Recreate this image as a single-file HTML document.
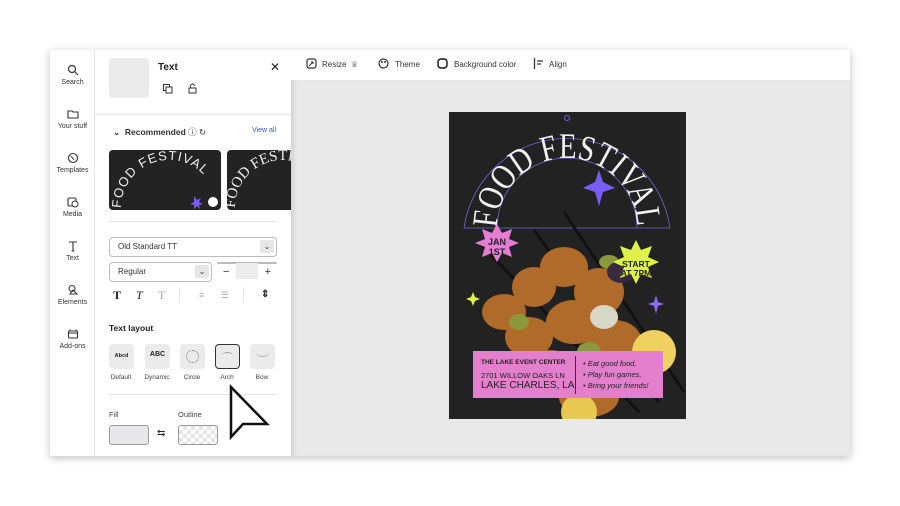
<!DOCTYPE html>
<html><head><meta charset="utf-8"><style>
*{box-sizing:border-box;margin:0;padding:0}
body{width:900px;height:506px;background:#fff;font-family:"Liberation Sans",sans-serif;position:relative;overflow:hidden;color:#222}
.win{position:absolute;left:50px;top:50px;width:800px;height:406px;background:#fff;box-shadow:0 2px 8px rgba(0,0,0,.25);overflow:hidden}
.rail{position:absolute;left:0;top:0;width:45px;height:406px;border-right:1px solid #e6e6e6}
.ri{position:absolute;left:0;width:45px;text-align:center;font-size:7px;color:#333}
.ri svg{display:block;margin:0 auto 3px}
.panel{position:absolute;left:45px;top:0;width:196px;height:406px;background:#fff}
.canvas{position:absolute;left:241px;top:30px;width:559px;height:376px;background:#e9e9e9;box-shadow:inset 6px 0 8px -6px rgba(0,0,0,.2)}
.tb{position:absolute;left:241px;top:0;width:559px;height:30px;background:#fff;font-size:8px;color:#333}
.tb span{position:absolute;top:10px}
.sel{position:absolute;border:1px solid #bbb;border-radius:4px;background:#fff;font-size:8px;color:#333;padding-left:8px;line-height:18px}
.lay{position:absolute;top:294px;width:25px;height:25px;background:#ebebeb;border-radius:4px}
.ll{position:absolute;top:324px;font-size:6.5px;color:#444;width:36px;text-align:center}
</style></head><body>
<div class="win">
 <div class="rail">
  <div class="ri" style="top:14px"><svg width="12" height="12" viewBox="0 0 12 12"><circle cx="5" cy="5" r="3.5" fill="none" stroke="#333" stroke-width="1.2"/><path d="M7.5 7.5L11 11" stroke="#333" stroke-width="1.2"/></svg>Search</div>
  <div class="ri" style="top:58px"><svg width="12" height="12" viewBox="0 0 12 12"><path d="M1 3h4l1 1h5v6H1z" fill="none" stroke="#333" stroke-width="1.1"/></svg>Your stuff</div>
  <div class="ri" style="top:102px"><svg width="12" height="12" viewBox="0 0 12 12"><circle cx="6" cy="6" r="4.5" fill="none" stroke="#333" stroke-width="1.1"/><path d="M4 4l3 4" stroke="#333"/></svg>Templates</div>
  <div class="ri" style="top:146px"><svg width="12" height="12" viewBox="0 0 12 12"><rect x="1" y="2" width="8" height="8" rx="1.5" fill="none" stroke="#333" stroke-width="1.1"/><circle cx="8" cy="8" r="3" fill="#fff" stroke="#333"/></svg>Media</div>
  <div class="ri" style="top:190px"><svg width="12" height="12" viewBox="0 0 12 12"><path d="M2 2h8M6 2v9M4.5 11h3" stroke="#333" stroke-width="1.1" fill="none"/></svg>Text</div>
  <div class="ri" style="top:234px"><svg width="12" height="12" viewBox="0 0 12 12"><circle cx="5" cy="4.5" r="3" fill="none" stroke="#333"/><path d="M3 10l3-4 4 4z" fill="none" stroke="#333"/></svg>Elements</div>
  <div class="ri" style="top:278px"><svg width="12" height="12" viewBox="0 0 12 12"><rect x="1.5" y="3" width="9" height="7" rx="1" fill="none" stroke="#333" stroke-width="1.1"/><path d="M3 3V1.5M9 3V1.5M1.5 5h9" stroke="#333"/></svg>Add-ons</div>
 </div>
 <div class="panel">
  <div style="position:absolute;left:14px;top:8px;width:40px;height:40px;background:#ebebeb;border-radius:4px"></div>
  <div style="position:absolute;left:63px;top:12px;font-size:10px;font-weight:bold">Text</div>
  <div style="position:absolute;left:175px;top:10px;font-size:12px">✕</div>
  <svg style="position:absolute;left:68px;top:34px" width="10" height="10" viewBox="0 0 10 10"><rect x="0.5" y="0.5" width="6" height="6" fill="none" stroke="#333"/><rect x="3" y="3" width="6" height="6" fill="#fff" stroke="#333"/></svg>
  <svg style="position:absolute;left:93px;top:33px" width="9" height="11" viewBox="0 0 9 11"><rect x="1" y="5" width="7" height="5" fill="none" stroke="#333"/><path d="M2.5 5V3a2 2 0 0 1 4 0" fill="none" stroke="#333"/></svg>
  <div style="position:absolute;left:0;top:63px;width:196px;height:3px;background:#f2f2f2"></div>
  <div style="position:absolute;left:18px;top:76px;font-size:8.5px;font-weight:bold;color:#333">⌄&nbsp; Recommended <span style="font-weight:normal">ⓘ ↻</span></div>
  <div style="position:absolute;left:157px;top:77px;font-size:7px;color:#3a56c5">View all</div>
  <div style="position:absolute;left:14px;top:100px;width:112px;height:60px;background:#232323;border-radius:4px;overflow:hidden">
   <svg width="112" height="60"><defs><path id="a1" d="M12 58 A48 48 0 0 1 108 58"/></defs><text font-family="Liberation Sans" font-size="13" fill="#eee" letter-spacing="1"><textPath href="#a1">FOOD FESTIVAL</textPath></text><path d="M85 46l3 4 4-2-2 4 4 2-4 1 1 4-3-3-3 3 0-4-4-1 4-2z" fill="#7a5cf5"/><circle cx="104" cy="52" r="5" fill="#fff"/></svg>
  </div>
  <div style="position:absolute;left:132px;top:100px;width:70px;height:60px;background:#232323;border-radius:4px;overflow:hidden">
   <svg width="112" height="60"><defs><path id="a2" d="M8 58 A48 48 0 0 1 104 58"/></defs><text font-family="Liberation Serif" font-size="15" fill="#eee"><textPath href="#a2">FOOD FESTIVAL</textPath></text></svg>
  </div>
  <div style="position:absolute;left:14px;top:171px;width:168px;height:1px;background:#e5e5e5"></div>
  <div class="sel" style="left:14px;top:187px;width:168px">Old Standard TT<span style="position:absolute;right:2px;top:2px;width:14px;height:13px;background:#e6e6e6;border-radius:2px;text-align:center;line-height:13px">⌄</span></div>
  <div class="sel" style="left:14px;top:212px;width:103px">Regular<span style="position:absolute;right:2px;top:2px;width:14px;height:13px;background:#e6e6e6;border-radius:2px;text-align:center;line-height:13px">⌄</span></div>
  <div class="sel" style="left:122px;top:212px;width:60px;padding:0"><span style="position:absolute;left:5px;font-size:11px">−</span><span style="position:absolute;left:18px;width:22px;height:16px;background:#ececec"></span><span style="position:absolute;right:5px;font-size:11px">+</span></div>
  <div style="position:absolute;left:18px;top:238px;font-family:'Liberation Serif';font-size:12px;font-weight:bold">T</div>
  <div style="position:absolute;left:41px;top:238px;font-family:'Liberation Serif';font-size:12px;font-style:italic">T</div>
  <div style="position:absolute;left:63px;top:238px;font-family:'Liberation Serif';font-size:12px;color:#aaa">T</div>
  <div style="position:absolute;left:84px;top:237px;width:1px;height:16px;background:#e5e5e5"></div>
  <div style="position:absolute;left:104px;top:240px;font-size:9px;color:#aaa">≡</div>
  <div style="position:absolute;left:126px;top:240px;font-size:9px;color:#aaa">☰</div>
  <div style="position:absolute;left:148px;top:237px;width:1px;height:16px;background:#e5e5e5"></div>
  <div style="position:absolute;left:166px;top:239px;font-size:10px;font-weight:bold">⇕</div>
  <div style="position:absolute;left:14px;top:273px;font-size:8.5px;font-weight:bold">Text layout</div>
  <div class="lay" style="left:14px;font-size:5.5px;font-weight:bold;text-align:center;line-height:25px">Abcd</div>
  <div class="lay" style="left:50px;font-size:7px;font-weight:bold;text-align:center;line-height:22px">ABC</div>
  <div class="lay" style="left:85px"><div style="margin:6px auto;width:13px;height:13px;border:1.5px dotted #777;border-radius:50%"></div></div>
  <div class="lay" style="left:120px;border:1.5px solid #333"><div style="margin:7px auto;width:13px;height:9px;border-top:1.5px dotted #666;border-radius:50% 50% 0 0"></div></div>
  <div class="lay" style="left:155px"><div style="margin:4px auto;width:13px;height:9px;border-bottom:1.5px dotted #666;border-radius:0 0 50% 50%"></div></div>
  <div class="ll" style="left:8px">Default</div><div class="ll" style="left:44px">Dynamic</div><div class="ll" style="left:79px">Circle</div><div class="ll" style="left:114px">Arch</div><div class="ll" style="left:149px">Bow</div>
  <div style="position:absolute;left:14px;top:344px;width:168px;height:1px;background:#e5e5e5"></div>
  <div style="position:absolute;left:14px;top:360px;font-size:7.5px;color:#444">Fill</div>
  <div style="position:absolute;left:83px;top:360px;font-size:7.5px;color:#444">Outline</div>
  <div style="position:absolute;left:14px;top:375px;width:40px;height:20px;background:#e8e8ec;border:1px solid #999;border-radius:3px"></div>
  <div style="position:absolute;left:62px;top:378px;font-size:10px">⇆</div>
  <div style="position:absolute;left:83px;top:375px;width:40px;height:20px;border:1px solid #999;border-radius:3px;background:repeating-conic-gradient(#e6e6e6 0 25%,#fff 0 50%) 0 0/8px 8px"></div>
 </div>
 <div class="tb">
  <svg style="position:absolute;left:15px;top:8px" width="11" height="11"><rect x="1" y="1" width="9" height="9" rx="2" fill="none" stroke="#333" stroke-width="1.2"/><path d="M3 8l4-4M5 4h2v2" stroke="#333" fill="none"/></svg><span style="left:31px">Resize &nbsp;<span style="position:static;color:#888">♛</span></span>
  <svg style="position:absolute;left:87px;top:8px" width="11" height="11"><circle cx="5.5" cy="5.5" r="4.5" fill="none" stroke="#333" stroke-width="1.2"/><circle cx="4" cy="4" r="1" fill="#333"/><circle cx="7" cy="4" r="1" fill="#333"/></svg><span style="left:104px">Theme</span>
  <svg style="position:absolute;left:146px;top:8px" width="11" height="11"><rect x="1" y="1" width="9" height="9" rx="3" fill="none" stroke="#111" stroke-width="1.4"/></svg><span style="left:163px">Background color</span>
  <svg style="position:absolute;left:242px;top:8px" width="11" height="11"><path d="M1.5 0v11M4 3h6M4 6h4" stroke="#333" stroke-width="1.3"/></svg><span style="left:258px">Align</span>
 </div>
 <div class="canvas"></div>
</div>
<!-- poster -->
<div style="position:absolute;left:449px;top:112px;width:237px;height:307px;background:#222;overflow:hidden">
 <svg width="237" height="307" style="position:absolute;left:0;top:0">
  <defs><path id="arc" d="M22 116 A96 96 0 0 1 214 116"/></defs>
  <path d="M15 116 A104 104 0 0 1 221 116" fill="none" stroke="#6a6ad8" stroke-width="0.8"/>
  <path d="M48 116 A70 70 0 0 1 188 116" fill="none" stroke="#6a6ad8" stroke-width="0.8"/>
  <line x1="15" y1="116" x2="221" y2="116" stroke="#6a6ad8" stroke-width="0.8"/>
  <circle cx="118" cy="6" r="2.5" fill="none" stroke="#6a6ad8"/>
  <defs><path id="arc2" d="M48 116 A70 70 0 0 1 188 116"/></defs>
  <text font-family="Liberation Serif" font-size="36" fill="#f2f2f2" textLength="218" lengthAdjust="spacingAndGlyphs"><textPath href="#arc2" textLength="218" lengthAdjust="spacingAndGlyphs">FOOD FESTIVAL</textPath></text>
  <path d="M150 58l4 12 12 6-12 4-4 14-4-14-12-4 12-6z" fill="#7b5cf5"/>
  <path d="M207 183l2 7 6 2-6 2-2 8-2-8-6-2 6-2z" fill="#8a6af5"/>
  <g stroke="#111" stroke-width="3"><line x1="30" y1="130" x2="190" y2="300"/><line x1="85" y1="118" x2="210" y2="290"/><line x1="115" y1="100" x2="235" y2="280"/></g>
  <g fill="#b06a2a"><ellipse cx="55" cy="200" rx="22" ry="18"/><ellipse cx="80" cy="225" rx="24" ry="20"/><ellipse cx="85" cy="175" rx="22" ry="20"/><ellipse cx="115" cy="155" rx="24" ry="20"/><ellipse cx="125" cy="210" rx="28" ry="22"/><ellipse cx="150" cy="180" rx="25" ry="24"/><ellipse cx="165" cy="230" rx="28" ry="22"/><ellipse cx="100" cy="260" rx="30" ry="22"/><ellipse cx="140" cy="285" rx="30" ry="20"/></g>
  <g fill="#8a9a3a"><ellipse cx="70" cy="210" rx="10" ry="8"/><ellipse cx="140" cy="240" rx="12" ry="10"/><ellipse cx="160" cy="150" rx="10" ry="7"/></g>
  <ellipse cx="155" cy="205" rx="14" ry="12" fill="#d8d8c8"/>
  <ellipse cx="172" cy="160" rx="14" ry="11" fill="#3a2a40"/>
  <circle cx="205" cy="240" r="22" fill="#f0d060"/>
  <circle cx="130" cy="300" r="18" fill="#e8c850"/>
  <path d="M48 112l5 9 10-4-3 10 10 4-10 4 3 10-10-4-5 9-5-9-10 4 3-10-10-4 10-4-3-10 10 4z" fill="#e57ed2"/>
  <text x="48" y="133" font-size="9" font-weight="bold" text-anchor="middle" fill="#222" font-family="Liberation Sans">JAN</text>
  <text x="48" y="143" font-size="9" font-weight="bold" text-anchor="middle" fill="#222" font-family="Liberation Sans">1ST</text>
  <path d="M187 128l5 10 11-4-4 11 11 5-11 5 4 11-11-4-5 10-5-10-11 4 4-11-11-5 11-5-4-11 11 4z" fill="#dff24a"/>
  <text x="187" y="155" font-size="8.5" font-weight="bold" text-anchor="middle" fill="#222" font-family="Liberation Sans">START</text>
  <text x="187" y="164" font-size="8.5" font-weight="bold" text-anchor="middle" fill="#222" font-family="Liberation Sans">AT 7PM</text>
  <path d="M24 180l2 5 5 2-5 2-2 5-2-5-5-2 5-2z" fill="#dff24a"/>
 </svg>
 <div style="position:absolute;left:24px;top:239px;width:190px;height:47px;background:#e37fcd;font-family:'Liberation Sans';color:#222">
  <div style="position:absolute;left:8px;top:8px;font-size:6.5px;font-weight:bold">THE LAKE EVENT CENTER</div>
  <div style="position:absolute;left:8px;top:20px;font-size:7.5px">2701 WILLOW OAKS LN</div>
  <div style="position:absolute;left:8px;top:29px;font-size:10px">LAKE CHARLES, LA</div>
  <div style="position:absolute;left:102px;top:5px;width:1px;height:38px;background:#333"></div>
  <div style="position:absolute;left:110px;top:7px;font-size:7.5px;font-style:italic;line-height:11px">• Eat good food,<br>• Play fun games,<br>• Bring your friends!</div>
 </div>
</div>
<svg style="position:absolute;left:228px;top:384px" width="44" height="58" viewBox="0 0 44 58"><path d="M3 3v50l12-13 24 0z" fill="#fff" stroke="#111" stroke-width="2.5" stroke-linejoin="miter"/></svg>
</body></html>
